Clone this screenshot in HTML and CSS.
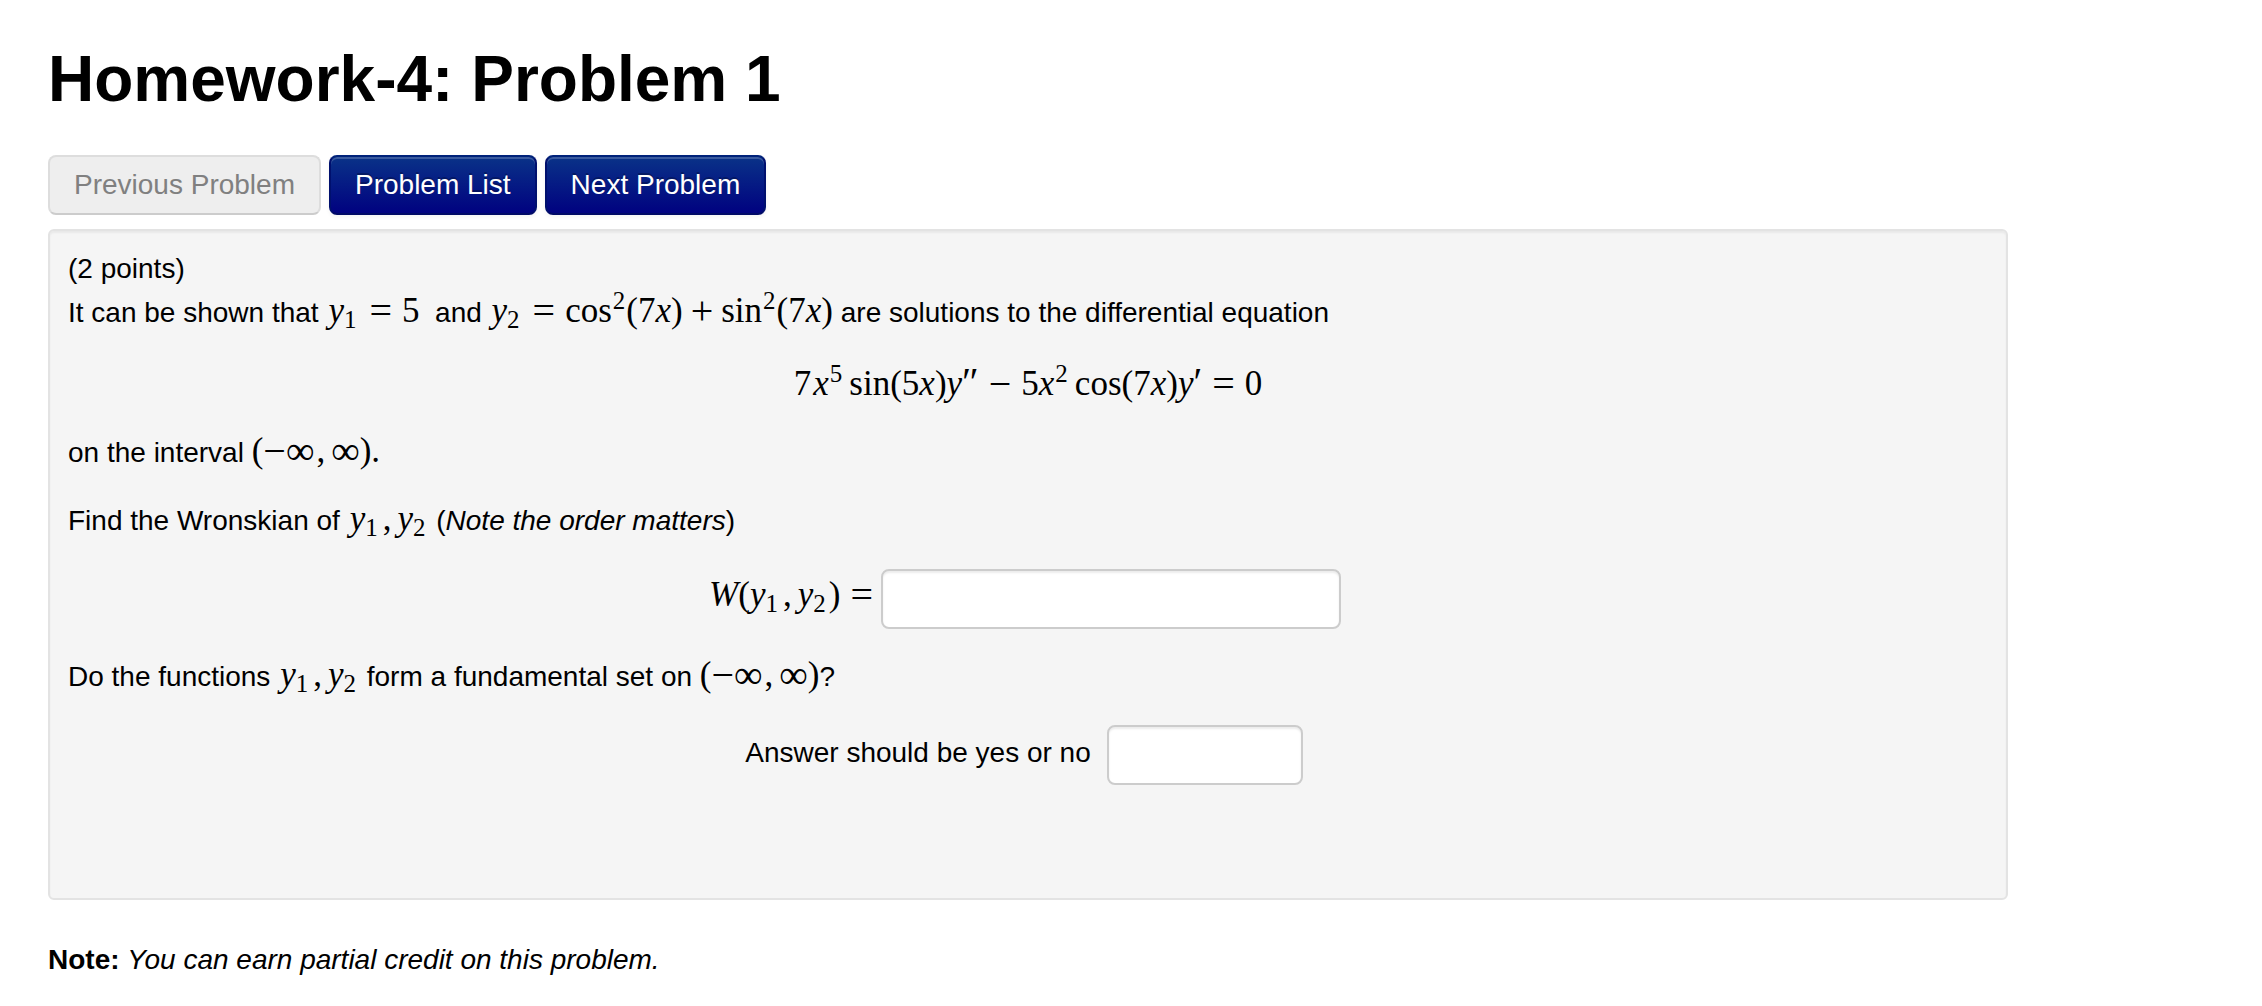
FILE: index.html
```html
<!DOCTYPE html>
<html lang="en">
<head>
    <meta charset="UTF-8">
    <meta name="viewport" content="width=device-width, initial-scale=1.0">
    <title>Homework-4: Problem 1</title>
    <link rel="stylesheet" href="styles.css">
</head>
<body>
    <h1>Homework-4: Problem 1</h1>
    <div class="nav-buttons">
        <button type="button" class="btn" disabled>Previous Problem</button>
        <button type="button" class="btn btn-primary">Problem List</button>
        <button type="button" class="btn btn-primary">Next Problem</button>
    </div>
    <form class="problem">
        <div class="points">(2 points)</div>
        <p>It can be shown that <span class="math"><i>y</i><sub>1</sub><span class="rel">=</span>5</span> &nbsp;and <span class="math"><i>y</i><sub>2</sub><span class="rel">=</span>cos<sup>2</sup>(7<i>x</i>)<span class="bin">+</span>sin<sup>2</sup>(7<i>x</i>)</span> are solutions to the differential equation</p>
        <p class="equation"><span class="math">7<i>x</i><sup>5</sup><span class="fn">sin</span>(5<i>x</i>)<i>y</i><span class="prime">″</span><span class="rel">−</span>5<i>x</i><sup>2</sup><span class="fn">cos</span>(7<i>x</i>)<i>y</i><span class="prime">′</span><span class="rel">=</span>0</span></p>
        <p>on the interval <span class="math">(<span class="inf">−∞</span><span class="comma">,</span><span class="inf">∞</span>).</span></p>
        <p>Find the Wronskian of <span class="math"><i>y</i><sub>1</sub><span class="comma">,</span><i>y</i><sub>2</sub></span> (<em>Note the order matters</em>)</p>
        <div class="answer">
            <label for="wronskian"><span class="math"><i>W</i>(<i>y</i><sub>1</sub><span class="comma">,</span><i>y</i><sub>2</sub>)<span class="rel rel-end">=</span></span></label>
            <input type="text" id="wronskian" class="input-long">
        </div>
        <p>Do the functions <span class="math"><i>y</i><sub>1</sub><span class="comma">,</span><i>y</i><sub>2</sub></span> form a fundamental set on <span class="math">(<span class="inf">−∞</span><span class="comma">,</span><span class="inf">∞</span>)</span>?</p>
        <div class="answer answer-text">
            <label for="fundamental">Answer should be yes or no</label>
            <input type="text" id="fundamental" class="input-short">
        </div>
    </form>
    <div class="note"><b>Note:</b> <i>You can earn partial credit on this problem.</i></div>
</body>
</html>
```
FILE: styles.css
```css
body {
    font-family: "Liberation Sans", Arial, sans-serif;
    font-size: 28px;
    line-height: 40px;
    color: #000;
    background-color: #fff;
    margin: 0;
    padding: 40px 254px 0 48px;
}
h1 {
    font-size: 64px;
    line-height: 78px;
    margin: 0 0 37px;
}
.nav-buttons {
    display: flex;
    gap: 8px;
    margin-bottom: 14px;
}
.btn {
    font-family: inherit;
    font-size: 28px;
    line-height: 40px;
    padding: 8px 24px;
    color: #808080;
    background-color: #eee;
    border: 2px solid #ddd;
    border-bottom-color: #ccc;
    border-radius: 8px;
}
.btn-primary {
    color: #fff;
    text-shadow: 0 -2px 0 rgba(0, 0, 0, 0.25);
    background: linear-gradient(to bottom, #0a3488, #000080) border-box;
    border-color: #00227a #00106e #000a66;
    box-shadow: inset 0 2px 0 rgba(255, 255, 255, 0.2), 0 2px 4px rgba(0, 0, 0, 0.05);
    cursor: pointer;
}
.problem {
    padding: 18px 18px 113px;
    background-color: #f5f5f5;
    border: 2px solid #e3e3e3;
    border-radius: 6px;
    box-shadow: inset 0 2px 2px rgba(0, 0, 0, 0.05);
}
.problem p {
    line-height: 48px;
    margin: 0 0 20px;
}
.problem .equation {
    text-align: center;
    margin: 25px 0 19px;
}

/* formulas */
.math {
    font-family: "Liberation Serif", "Times New Roman", serif;
    font-size: 35px;
    line-height: 1;
    white-space: nowrap;
}
.math i:first-child {
    margin-left: 2px;
}
.math sub,
.math sup {
    font-size: 25px;
    line-height: 0;
}
.math sub {
    vertical-align: -6px;
    margin-right: 3px;
}
.math sup {
    vertical-align: 13px;
    margin: 0 1px;
}
.rel,
.bin,
.inf,
.prime {
    font-size: 40px;
    line-height: 0;
}
.rel,
.bin,
.inf {
    vertical-align: -2px;
}
.rel {
    margin: 0 10px;
}
.rel-end {
    margin-right: 0;
}
.bin {
    margin: 0 8px;
}
.fn {
    margin-left: 6px;
}
.comma {
    margin: 0 6px 0 2px;
}

.answer {
    display: flex;
    justify-content: center;
    align-items: center;
    gap: 8px;
    margin: 24px 0;
    padding-right: 8px;
}
.answer-text {
    gap: 16px;
    margin-bottom: 0;
}
.answer label {
    padding-bottom: 4px;
}
input {
    box-sizing: border-box;
    height: 60px;
    padding: 8px 12px;
    font-family: inherit;
    font-size: 28px;
    background-color: #fff;
    border: 2px solid #ccc;
    border-radius: 8px;
    box-shadow: inset 0 2px 2px rgba(0, 0, 0, 0.08);
}
.input-long {
    width: 460px;
}
.input-short {
    width: 196px;
}
.note {
    margin-top: 40px;
}
```
